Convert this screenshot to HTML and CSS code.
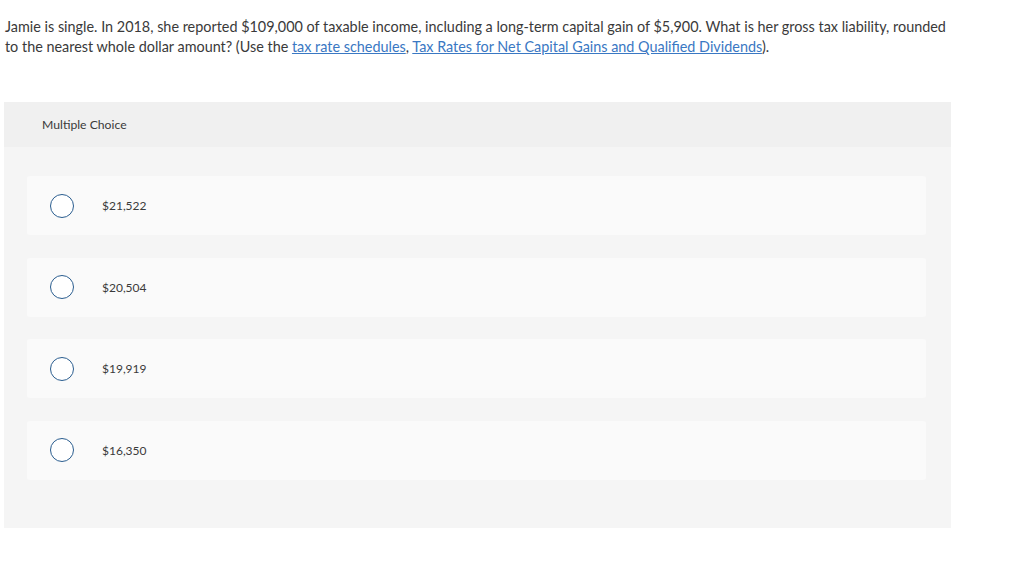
FILE: index.html
```html
<!DOCTYPE html>
<html>
<head>
<meta charset="utf-8">
<link rel="stylesheet" href="styles.css">
</head>
<body>
<div class="page">
  <p class="question">Jamie is single. In 2018, she reported $109,000 of taxable income, including a long-term capital gain of $5,900. What is her gross tax liability, rounded to the nearest whole dollar amount? (Use the <a href="#">tax rate schedules</a>, <a href="#">Tax Rates for Net Capital Gains and Qualified Dividends</a>).</p>
  <div class="panel">
    <div class="panel-head">Multiple Choice</div>
    <div class="panel-body">
      <div class="option"><span class="radio"></span><span class="label">$21,522</span></div>
      <div class="option"><span class="radio"></span><span class="label">$20,504</span></div>
      <div class="option"><span class="radio"></span><span class="label">$19,919</span></div>
      <div class="option"><span class="radio"></span><span class="label">$16,350</span></div>
    </div>
  </div>
</div>
</body>
</html>
```
FILE: styles.css
```css
html, body { margin: 0; padding: 0; background: #fff; }
body { font-family: "Lato", "Open Sans", Arial, sans-serif; color: #3a3a3a; }
.page { padding: 17px 0 0 4px; width: 947px; }
.question { margin: 0 0 45px 1px; width: 955px; font-size: 14.4px; line-height: 20px; color: #3a3a3a; }
.question a { color: #3a78c3; text-decoration: underline; }
.panel { background: #f5f5f5; }
.panel-head { background: #f0f0f0; height: 45px; display: flex; align-items: center; padding-left: 38px; font-size: 12.2px; color: #3a3a3a; }
.panel-body { padding: 29px 25px 48px 23px; display: flex; flex-direction: column; gap: 22.5px; }
.option { background: #fafafa; border-radius: 3px; height: 59px; display: flex; align-items: center; }
.radio { width: 22px; height: 22px; border: 1.5px solid #2a5d8f; border-radius: 50%; background: #fff; margin-left: 23px; flex: none; }
.label { margin-left: 28px; font-size: 12px; color: #3a3a3a; }
```
